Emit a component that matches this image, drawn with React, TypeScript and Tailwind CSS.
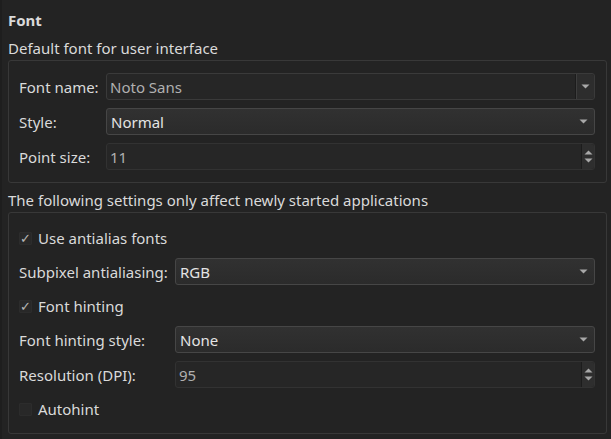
import React from "react";

const font = { fontFamily: '"Noto Sans", "DejaVu Sans", sans-serif' };

function DownArrow() {
  return (
    <svg width="9" height="5" viewBox="0 0 9 5">
      <path d="M0.5 0.5 L8.5 0.5 L4.5 4.5 Z" fill="#a8a8a8" />
    </svg>
  );
}

function UpArrow() {
  return (
    <svg width="9" height="5" viewBox="0 0 9 5">
      <path d="M0.5 4.5 L8.5 4.5 L4.5 0.5 Z" fill="#a8a8a8" />
    </svg>
  );
}

// editable combo (text field + separate button)
function EditCombo({ value }: { value: string }) {
  return (
    <div className="flex h-[27px] rounded-[3px] border border-[#3a3a3a] bg-[#262626]">
      <div className="flex flex-1 items-center pl-[3px] text-[#b0b0b0]">{value}</div>
      <div className="flex w-[19px] items-center justify-center rounded-r-[3px] border-l border-[#1c1c1c] bg-[#2d2d2d] shadow-[inset_1px_0_0_#3e3e3e]">
        <DownArrow />
      </div>
    </div>
  );
}

// plain button combo
function Combo({ value }: { value: string }) {
  return (
    <div className="flex h-[27px] items-center rounded-[3px] border border-[#464646] bg-gradient-to-b from-[#313131] to-[#2b2b2b] pl-[4px] pr-[6px] text-[#e4e4e4]">
      <div className="flex-1">{value}</div>
      <DownArrow />
    </div>
  );
}

function Spin({ value }: { value: string }) {
  return (
    <div className="flex h-[27px] rounded-[3px] border border-[#323232] bg-[#262626]">
      <div className="flex flex-1 items-center pl-[3px] text-[#b0b0b0]">{value}</div>
      <div className="flex w-[13px] flex-col items-center justify-center gap-[3px] rounded-r-[3px] border-l border-[#1c1c1c] bg-[#2e2e2e]">
        <UpArrow />
        <DownArrow />
      </div>
    </div>
  );
}

function Check({ label, checked }: { label: string; checked: boolean }) {
  return (
    <div className="flex h-[22px] items-center gap-[6px]">
      <div className="flex h-[13px] w-[13px] items-center justify-center rounded-[1px] border border-[#2c2c2c] bg-[#282828] text-[13px] leading-none text-[#b8b8b8]">
        {checked ? "✓" : ""}
      </div>
      <span>{label}</span>
    </div>
  );
}

export default function App() {
  return (
    <div
      className="flex h-[439px] w-[611px] flex-col overflow-hidden border-l-2 border-[#1e1e1e] bg-[#232323] pl-[6px] pr-[4px] text-[15px] leading-[20px] text-[#dadada]"
      style={font}
    >
      {/* Header */}
      <div className="mt-[10px] font-bold">Font</div>
      <div className="mt-[8px]">Default font for user interface</div>

      {/* Group 1 */}
      <div className="mt-[2px] grid h-[123px] grid-cols-[87px_1fr] content-start gap-y-[8px] rounded-[3px] border border-[#383838] pl-[10px] pr-[11px] pt-[12px]">
        <div className="flex items-center">Font name:</div>
        <EditCombo value="Noto Sans" />
        <div className="flex items-center">Style:</div>
        <Combo value="Normal" />
        <div className="flex items-center">Point size:</div>
        <Spin value="11" />
      </div>

      <div className="mt-[7px]">The following settings only affect newly started applications</div>

      {/* Group 2 */}
      <div className="mt-[2px] flex h-[222px] flex-col rounded-[3px] border border-[#383838] pl-[10px] pr-[11px] pt-[14px]">
        <Check label="Use antialias fonts" checked />
        <div className="mt-[9px] grid grid-cols-[156px_1fr]">
          <div className="flex items-center">Subpixel antialiasing:</div>
          <Combo value="RGB" />
        </div>
        <div className="mt-[10px]">
          <Check label="Font hinting" checked />
        </div>
        <div className="mt-[9px] grid grid-cols-[156px_1fr] gap-y-[8px]">
          <div className="flex items-center">Font hinting style:</div>
          <Combo value="None" />
          <div className="flex items-center">Resolution (DPI):</div>
          <Spin value="95" />
        </div>
        <div className="mt-[10px]">
          <Check label="Autohint" checked={false} />
        </div>
      </div>
    </div>
  );
}
